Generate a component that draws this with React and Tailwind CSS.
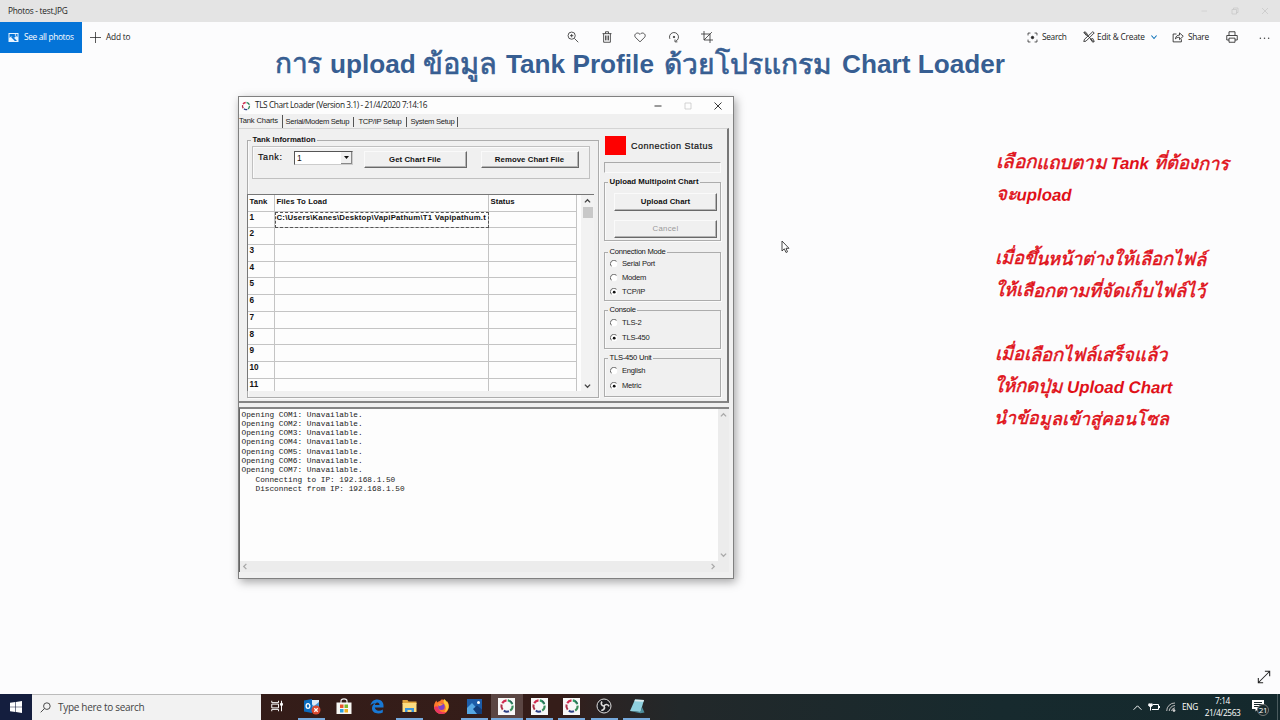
import React from "react";

const UI = "font-['Open_Sans','Noto_Sans',sans-serif]";

function Ico({ w = 12, box = "0 0 16 16", children, cls = "", sw = 1.1 }) {
  return (
    <svg width={w} height={w} viewBox={box} fill="none" stroke="currentColor" strokeWidth={sw} className={"shrink-0 block " + cls}>
      {children}
    </svg>
  );
}

function TlsLogo({ size }) {
  return (
    <svg width={size} height={size} viewBox="0 0 20 20" fill="none" strokeWidth="2.6" className="block shrink-0">
      <path d="M11 3 A7 7 0 0 1 16.6 7.8" stroke="#2e9a63" />
      <path d="M17 9.5 A7 7 0 0 1 14 15.8" stroke="#3b8f5c" />
      <path d="M12.5 16.6 A7 7 0 0 1 6 15.8" stroke="#2c3f86" />
      <path d="M4.6 14.5 A7 7 0 0 1 3.2 8.2" stroke="#b03048" />
      <path d="M4 6.4 A7 7 0 0 1 9.4 3" stroke="#d02c50" />
      <path d="M14 3.5 L17 6.5" stroke="#303050" strokeWidth="1.2" />
    </svg>
  );
}

function TitleBar() {
  return (
    <div className="flex h-[22px] shrink-0 items-center bg-[#e4e4e4] pl-2 pr-[11px] text-[8.3px] text-[#222]">
      <span className="tracking-[-0.26px]">Photos - test.JPG</span>
      <div className="ml-auto flex items-center gap-[22px] text-[#c8c8c8]">
        <Ico w={8} cls="mr-[1px]"><path d="M3 8h11" /></Ico>
        <Ico w={8} sw={1.6}><path d="M2 5h9v9H2zM5 5V2h9v9h-3" /></Ico>
        <Ico w={8} sw={1.6}><path d="M2 2l12 12M14 2L2 14" /></Ico>
      </div>
    </div>
  );
}

function Toolbar() {
  return (
    <div className="flex h-[31px] shrink-0 items-center text-[8.3px] text-[#222]">
      <div className="flex h-[31px] w-[82px] shrink-0 items-center gap-[5px] bg-[#0474d8] pl-2 text-white">
        <svg width="11" height="11" viewBox="0 0 11 11" className="block">
          <path d="M.5 1h10v9H.5z" fill="#e8f4ff" />
          <path d="M1.5 2h8v3l-1.5-1-2 2-2.5-2.3-2 2.3z" fill="#0474d8" />
          <path d="M4 3.8l5 5.2H6.8L3 5z" fill="#0474d8" />
          <circle cx="7.5" cy="3" r=".8" fill="#fff" />
        </svg>
        <span className="whitespace-nowrap tracking-[-0.32px]">See all photos</span>
      </div>
      <div className="flex w-[485px] items-center gap-[5px] pl-2">
        <Ico w={11}><path d="M8 0v16M0 8h16" /></Ico>
        <span className="tracking-[-0.2px]">Add to</span>
      </div>
      <div className="flex h-[30px] items-center gap-[21.5px] self-start text-[#333]">
        <Ico w={12}><circle cx="6.2" cy="6.2" r="4.8" /><path d="M10 10l5 5M4 6.2h4.4M6.2 4v4.4" /></Ico>
        <Ico w={12}><path d="M2 3.5h12M6 3.5V1h4v2.500M3.500 3.500V15h9V3.500M6 6v6.500M8 6v6.500M10 6v6.500" /></Ico>
        <Ico w={12}><path d="M8 14.500L1.700 8.200C-.8 4.500 4.500.300 8 4.500 11.500.300 16.800 4.500 14.300 8.200z" /></Ico>
        <Ico w={12}><path d="M2.500 10.500A6 6 0 1 1 10.500 13.500M12.500 14.500H9.300v-3.200" /><circle cx="8" cy="8" r="1" fill="currentColor" /></Ico>
        <Ico w={12}><path d="M4 0v12h12M0 4h12v12M4 12L14.500 1.500" /></Ico>
      </div>
      <div className="ml-auto flex h-[30px] items-center self-start pr-[10px]">
        <Ico w={11}><path d="M5 1.500H1.500V5M11 1.500h3.500V5M5 14.500H1.500V11M11 14.500h3.500V11" /><circle cx="8" cy="8" r="1.800" fill="currentColor" /></Ico>
        <span className="ml-[4px] w-[41px] tracking-[-0.3px]">Search</span>
        <Ico w={12}><path d="M2 1.500l12 13M1 14l1-3L13 1l2 1.500L4 13.500zM1 2l2-1 3 3.500-1.500 1.500zM10 11l3-1 2 4-2 1z" /></Ico>
        <span className="ml-[2px] w-[54px] whitespace-nowrap tracking-[-0.22px]">Edit &amp; Create</span>
        <Ico w={6} sw={2.8} cls="text-[#0a70b8] mr-[15px]"><path d="M1 4l7 8 7-8" /></Ico>
        <Ico w={12}><path d="M6 4H1.500v10.500h11V11M4.500 10.500C5 7 7 5.500 10 5.500V2.500L15 7l-5 4.500V8.500C7.500 8.300 6 9 4.500 10.500z" /></Ico>
        <span className="ml-[4px] w-[38px] tracking-[-0.3px]">Share</span>
        <Ico w={12}><path d="M4 6V1h8v5M4 12H1V6h14v6h-3M4 9.500h8V15H4z" /></Ico>
        <Ico w={11} cls="ml-[21px]" sw={0}><g fill="#444"><circle cx="2" cy="9" r="1.100" /><circle cx="8" cy="9" r="1.100" /><circle cx="14" cy="9" r="1.100" /></g></Ico>
      </div>
    </div>
  );
}

function Button({ children, cls = "" }) {
  return (
    <div className={"flex items-center justify-center border border-t-[#fafafa] border-l-[#fafafa] border-r-[#696969] border-b-[#696969] bg-[#f0f0f0] shadow-[inset_-1px_-1px_0_#b4b4b4] whitespace-nowrap text-[7.8px] font-bold tracking-[0.05px] text-[#111] " + cls}>
      {children}
    </div>
  );
}

function Group({ title, bold, cls = "", children }) {
  return (
    <fieldset className={"min-w-0 border border-[#acacac] shadow-[inset_1px_0_0_#fafafa,1px_1px_0_#fafafa] " + cls}>
      <legend className={"ml-[3px] h-[10px] whitespace-nowrap px-[1.500px] leading-[10px] " + (bold ? "text-[7.8px] font-bold tracking-[0.03px]" : "text-[7.6px] tracking-[-0.23px]")}>
        {title}
      </legend>
      {children}
    </fieldset>
  );
}

function Radio({ on, children, cls = "" }) {
  return (
    <div className={"flex h-[10px] items-center gap-[4px] pl-[5px] text-[7.6px] leading-[10px] tracking-[-0.23px] text-[#222] " + cls}>
      <svg width="8" height="8" viewBox="0 0 8 8" className="block shrink-0">
        <circle cx="4" cy="4" r="3.200" fill="#fff" />
        <path d="M6.500 1.300A3.400 3.400 0 0 0 1.400 6.300" fill="none" stroke="#666" strokeWidth="1" />
        {on && <circle cx="4.200" cy="4.200" r="1.400" fill="#111" />}
      </svg>
      {children}
    </div>
  );
}

function Chevron({ dir, color }) {
  const d = { up: "M1 5l3-3 3 3", down: "M1 3l3 3 3-3", left: "M5 1L2 4l3 3", right: "M3 1l3 3-3 3" }[dir];
  return (
    <svg width="7" height="7" viewBox="0 0 8 8" fill="none" stroke={color} strokeWidth="1.500" className="block shrink-0"><path d={d} /></svg>
  );
}

function TankTable() {
  return (
    <div className="flex h-[197px] w-[347px] border-l border-t border-[#777] bg-[#fdfdfd] text-[7.8px] font-bold tracking-[0.07px] text-[#111]">
      <div className="grid w-[330px] shrink-0 auto-rows-[16.7px] grid-cols-[27px_214px_88px] content-start overflow-hidden">
        {["Tank", "Files To Load", "Status"].map((h) => (
          <div key={h} className="border-b border-r border-[#c4c4c4] pl-[1.500px] leading-[13px]">{h}</div>
        ))}
        {Array.from({ length: 11 }, (_, i) => (
          <React.Fragment key={i}>
            <div className="border-b border-r border-[#c4c4c4] pl-[1.500px] text-[8.2px] leading-[12.500px]">{i + 1}</div>
            <div className={"whitespace-nowrap border-b border-r border-[#c4c4c4] pl-[1.500px] leading-[12.500px] tracking-[0.2px] " + (i === 0 ? "outline-dashed outline-1 -outline-offset-1 outline-[#555]" : "")}>
              {i === 0 ? "C:\\Users\\Kanes\\Desktop\\VapiPathum\\T1 Vapipathum.t" : ""}
            </div>
            <div className="border-b border-r border-[#c4c4c4]" />
          </React.Fragment>
        ))}
      </div>
      <div className="ml-[3px] flex w-[13px] flex-col items-center bg-[#f2f2f2] pt-[3px] pb-[2px]">
        <Chevron dir="up" color="#444" />
        <div className="mt-[2px] h-[11px] w-[10px] bg-[#c8c8c8]" />
        <div className="mt-auto"><Chevron dir="down" color="#444" /></div>
      </div>
    </div>
  );
}

const LOG = [
  ...[1, 2, 3, 4, 5, 6, 7].map((n) => `Opening COM${n}: Unavailable.`),
  "   Connecting to IP: 192.168.1.50",
  "   Disconnect from IP: 192.168.1.50",
];

function LoaderWindow() {
  return (
    <div className="flex h-[483px] w-[496px] shrink-0 flex-col border border-[#808080] bg-[#f0f0f0] font-['Liberation_Sans',Arial,sans-serif] text-[#111] shadow-[2px_3px_9px_rgba(0,0,0,0.35)]">
      <div className={"flex h-[17px] shrink-0 items-center bg-[#fdfdfd] pl-[2px] pr-[11px] text-[8.300px] text-[#222] " + UI}>
        <TlsLogo size={10} />
        <span className="ml-[4px] whitespace-nowrap tracking-[-0.41px]">TLS Chart Loader (Version 3.1) - 21/4/2020 7:14:16</span>
        <div className="ml-auto flex items-center gap-[22px]">
          <Ico w={8} sw={1.800}><path d="M1 8h14" /></Ico>
          <Ico w={8} cls="text-[#c4c4c4]" sw={1.500}><path d="M2 2h12v12H2z" /></Ico>
          <Ico w={8} sw={1.800}><path d="M1 1l14 14M15 1L1 15" /></Ico>
        </div>
      </div>
      <div className="flex h-[14px] shrink-0 pt-[1px] text-[7.600px] leading-[13px] tracking-[-0.28px] text-[#222]">
        <div className="w-[44px] border-r border-[#555] leading-[11px] tracking-[-0.14px]">Tank Charts</div>
        <div className="mt-[2px] flex h-[10px] leading-[10px]">
          <div className="w-[71px] border-r border-[#555] pl-[2.500px]">Serial/Modem Setup</div>
          <div className="w-[53px] border-r border-[#555] pl-[4.500px]">TCP/IP Setup</div>
          <div className="w-[51px] border-r border-[#555] pl-[3.500px]">System Setup</div>
        </div>
      </div>
      <div className="mr-[4px] flex h-[275px] shrink-0 border-b-2 border-r-2 border-t border-b-[#858585] border-r-[#777] border-t-[#d4d4d4] pl-[8px]">
        <div className="w-[352px] shrink-0 pt-[6px]">
          <Group title="Tank Information" bold cls="h-[263px]">
            <div className="ml-[4px] mt-[1px] flex h-[33px] w-[338px] border border-[#c0c0c0] shadow-[inset_1px_1px_0_#fafafa] pl-[5px] pt-[4px]">
              <span className="w-[36px] text-[9px] leading-[13px] tracking-[0.6px] [-webkit-text-stroke:0.2px]">Tank:</span>
              <div className="flex h-[14px] w-[59px] border border-b-[#ccc] border-l-[#555] border-r-[#ccc] border-t-[#555] bg-white pl-[2px] text-[8.500px] leading-[12px]">
                1
                <div className="ml-auto flex w-[11px] items-center justify-center border-b border-r border-[#888] bg-[#f0f0f0]">
                  <svg width="5" height="3" viewBox="0 0 5 3" className="block"><path d="M0 0h5L2.500 3z" fill="#111" /></svg>
                </div>
              </div>
              <Button cls="ml-[10.500px] h-[17px] w-[103px]">Get Chart File</Button>
              <Button cls="ml-[14px] h-[17px] w-[98px]">Remove Chart File</Button>
            </div>
            <div className="-ml-px mt-[15px]"><TankTable /></div>
          </Group>
        </div>
        <div className="ml-[5px] flex w-[117px] flex-col">
          <div className="flex items-center gap-[5px] pl-[1px] pt-[7px]">
            <div className="h-[19px] w-[21px] shrink-0 bg-[#fe0000]" />
            <span className="whitespace-nowrap pt-[2px] text-[9px] leading-[13px] tracking-[0.5px] [-webkit-text-stroke:0.2px]">Connection Status</span>
          </div>
          <div className="mt-[7px] h-[11px] shrink-0 border border-b-[#fafafa] border-l-[#aaa] border-r-[#fafafa] border-t-[#aaa]" />
          <Group title="Upload Multipoint Chart" bold cls="mt-[4px] h-[64px]">
            <Button cls="ml-[9px] mt-[6px] h-[18px] w-[103px]">Upload Chart</Button>
            <Button cls="ml-[9px] mt-[9px] h-[18px] w-[103px] !font-normal !text-[#999] !tracking-[0.3px]">Cancel</Button>
          </Group>
          <Group title="Connection Mode" cls="mt-[6px] h-[54px]">
            <Radio cls="mt-[2px]">Serial Port</Radio>
            <Radio cls="mt-[4px]">Modem</Radio>
            <Radio on cls="mt-[4px]">TCP/IP</Radio>
          </Group>
          <Group title="Console" cls="mt-[4px] h-[44px]">
            <Radio cls="mt-[3px]">TLS-2</Radio>
            <Radio on cls="mt-[5px]">TLS-450</Radio>
          </Group>
          <Group title="TLS-450 Unit" cls="mt-[4px] h-[44px]">
            <Radio cls="mt-[3px]">English</Radio>
            <Radio on cls="mt-[5px]">Metric</Radio>
          </Group>
        </div>
      </div>
      <div className="mr-[4px] mt-[4px] flex h-[165px] shrink-0 flex-col border-l border-t-2 border-l-[#666] border-t-[#858585]">
        <div className="flex min-h-0 flex-1">
          <div className="flex-1 bg-[#fdfdfd] pl-[1.500px] pt-[1.500px] font-['Liberation_Mono','Courier_New',monospace] text-[7.770px] leading-[9.330px] text-[#222]">
            {LOG.map((l) => <div key={l} className="whitespace-pre">{l}</div>)}
          </div>
          <div className="flex w-[11px] flex-col items-center justify-between bg-[#ececec] py-[3px]">
            <Chevron dir="up" color="#aaa" />
            <Chevron dir="down" color="#aaa" />
          </div>
        </div>
        <div className="flex h-[11px] shrink-0 items-center justify-between bg-[#ececec] pl-[2px] pr-[13px]">
          <Chevron dir="left" color="#aaa" />
          <Chevron dir="right" color="#aaa" />
        </div>
      </div>
    </div>
  );
}

const NOTES = [
  [["เลือกแถบตาม", "text-[18.900px]"], [" Tank ", ""], ["ที่ต้องการ", "text-[18.300px]"]],
  [["จะ", "text-[18.600px]"], ["upload", ""]],
  [],
  [["เมื่อขึ้นหน้าต่างให้เลือกไฟล์", "text-[18.200px]"]],
  [["ให้เลือกตามที่จัดเก็บไฟล์ไว้", "text-[18.300px]"]],
  [],
  [["เมื่อเลือกไฟล์เสร็จแล้ว", "text-[18.400px]"]],
  [["ให้กดปุ่ม", "text-[18.600px]"], [" Upload Chart", ""]],
  [["นำข้อมูลเข้าสู่คอนโซล", "text-[17.700px]"]],
];

function TaskItem({ open, active, first, children }) {
  return (
    <div className={"flex h-full flex-col items-center justify-center " + (first ? "w-[34.500px] pr-[2px] " : "w-[32.500px] ") + (active ? "bg-[#5b4643]" : "")}>
      <div className="flex flex-1 items-center justify-center">{children}</div>
      <div className={"h-[2px] " + (active ? "w-[32px] " : "w-[27px] ") + (open ? "bg-[#76a9dc]" : "")} />
    </div>
  );
}

function TlsTile() {
  return <div className="flex h-[17px] w-[17px] items-center justify-center bg-[#f8f8f8]"><TlsLogo size={16} /></div>;
}

function Taskbar() {
  return (
    <div className={"flex h-[26px] shrink-0 items-center bg-[linear-gradient(90deg,#331c18_0px,#351d19_560px,#2a2424_610px,#22282a_680px,#172a2e_1000px,#14292d_1280px)] text-white " + UI}>
      <div className="flex h-full w-[32px] items-center justify-center bg-[#141e3e]">
        <svg width="12" height="12" viewBox="0 0 12 12" fill="#fff" className="block"><path d="M0 1.700L5.400 1v4.700H0zM6 .9L12 0v5.700H6zM0 6.300h5.400V11L0 10.300zM6 6.300h6V12l-6-.9z" /></svg>
      </div>
      <div className="flex h-full w-[229px] items-center border-t border-[#bbb] bg-[#f2f2f2] pl-[8px] text-[#444]">
        <Ico w={11} sw={1.400}><circle cx="10" cy="6" r="4.800" /><path d="M6.500 9.500L1 15" /></Ico>
        <span className="ml-[7px] text-[10px] tracking-[-0.3px]">Type here to search</span>
      </div>
      <div className="flex h-full">
        <TaskItem first>
          <Ico w={12} sw={1.300}><path d="M1 1v2.500h9V1M1 5.500h9v5H1zM1 15v-2.500h9V15M14 1v14" /><path d="M12.800 4.500h2.400v2.500h-2.400z" fill="#fff" /></Ico>
        </TaskItem>
        <TaskItem open>
          <svg width="18" height="17" viewBox="0 0 18 17" className="block">
            <path d="M6 2h10v11H6z" fill="#dcebf8" /><path d="M6 4l5 4 5-4v9H6z" fill="#3f97dc" />
            <path d="M1 2.500L9 1v14l-8-1.500z" fill="#0b6cc0" />
            <ellipse cx="5" cy="8" rx="1.900" ry="2.400" fill="none" stroke="#fff" strokeWidth="1.300" />
            <circle cx="13" cy="12" r="4.500" fill="#d9492f" /><path d="M11.300 10.300l3.400 3.400M14.700 10.300l-3.400 3.400" stroke="#fff" strokeWidth="1.300" />
          </svg>
        </TaskItem>
        <TaskItem>
          <svg width="16" height="17" viewBox="0 0 16 17" className="block">
            <path d="M5 5V3a3 2.200 0 0 1 6 0v2" fill="none" stroke="#eee" strokeWidth="1.200" />
            <path d="M.5 4.500h15V16H.5z" fill="#f8f8f4" />
            <path d="M4 6.500h3.500V10H4z" fill="#e8542c" /><path d="M8.500 6.500H12V10H8.500z" fill="#7cb82c" />
            <path d="M4 11h3.500v3.500H4z" fill="#28a0e0" /><path d="M8.500 11H12v3.500H8.500z" fill="#f0b020" />
          </svg>
        </TaskItem>
        <TaskItem>
          <svg width="14" height="15" viewBox="0 0 14 15" className="block">
            <path d="M.5 6.500C1.200 2.500 4 .5 7.200.5c4 0 6.300 2.800 6.300 6v2H4.800c.2 2 1.800 3.200 4 3.200 1.500 0 2.800-.4 4-1.200v3c-1.200.7-2.700 1-4.500 1C4.500 14.500 2 12.500 2 9.300c0-2.200 1.200-4 3.200-5C3.300 4.300 1.500 5 .5 6.500zM4.900 6h4.600c0-1.500-.8-2.500-2.200-2.500C5.900 3.500 5.100 4.600 4.900 6z" fill="#1878d4" />
          </svg>
        </TaskItem>
        <TaskItem open>
          <svg width="15" height="14" viewBox="0 0 15 14" className="block">
            <path d="M.5 1h5l1 1.500h8V5H.5z" fill="#e0a43c" /><path d="M.5 4h14v9H.5z" fill="#fbdc80" /><path d="M3 9h9v4H3z" fill="#3c96dc" /><path d="M5.500 11h4v2h-4z" fill="#fbdc80" />
          </svg>
        </TaskItem>
        <TaskItem>
          <svg width="17" height="17" viewBox="0 0 17 17" className="block">
            <path d="M8.500 1.500C11 1 12 3 12.500 4l2-.5c1.500 2.500 2 5.500.5 8.500-1.500 3-4 4-6.500 4-4 0-7.500-3-7.500-7.500C1 6 2 4 3.500 2.500l.5 2c1-1 2-1.500 3-1.500z" fill="#ff7a2a" />
            <path d="M11 1c3 2 5 5 4.500 8.500C15 12 13 14 11 14.500c2-2 2.500-5 1-7.500-1-1.500-2-3-1-6z" fill="#ffc83a" />
            <path d="M1.200 9C1.500 13 4.500 16 8.500 16c2.500 0 4-1 5-2-3 1-7 0-8-3.500C5 8.500 4 7.500 1.200 9z" fill="#e83464" />
            <circle cx="8.500" cy="8.800" r="3.200" fill="#8040c8" /><path d="M5 6c2-1.500 4-.5 5 1-2-.3-2 1-4 1z" fill="#ff9a30" />
          </svg>
        </TaskItem>
        <TaskItem open>
          <svg width="15" height="15" viewBox="0 0 15 15" className="block">
            <path d="M0 0h15v15H0z" fill="#1c5ca8" /><path d="M0 9l5-5 10 11H0z" fill="#56a8e4" /><path d="M6 10l4-3.500 5 4V15H10z" fill="#123f7c" /><circle cx="11.500" cy="3.500" r="1.500" fill="#fff" />
          </svg>
        </TaskItem>
        <TaskItem open active><TlsTile /></TaskItem>
        <TaskItem open><TlsTile /></TaskItem>
        <TaskItem open><TlsTile /></TaskItem>
        <TaskItem open>
          <svg width="16" height="16" viewBox="0 0 16 16" className="block" fill="none" stroke="#ddd">
            <circle cx="8" cy="8" r="7" fill="#1c1c20" strokeWidth="1" />
            <path d="M8 8C5.500 8 4.500 5.500 6 3.500M8 8c1.300-2.100 4-2 5 .3M8 8c1.200 2.200-.3 4.500-2.800 4.500" strokeWidth="1.700" />
          </svg>
        </TaskItem>
        <TaskItem open>
          <svg width="16" height="16" viewBox="0 0 16 16" className="block">
            <path d="M6 1.500l9 .5-3.500 12-10.500-1z" fill="#8fd0de" /><path d="M6 1.500l9 .5-.5 1.800-9-.6z" fill="#dcecee" /><path d="M1 13l10.500 1 1.500-5 2.500 5.500-4 .8z" fill="#4d8e9e" />
          </svg>
        </TaskItem>
      </div>
      <div className="ml-auto flex h-full items-center">
        <Ico w={9} sw={1.700}><path d="M1 12l7-7 7 7" /></Ico>
        <svg width="12" height="10" viewBox="0 0 12 10" fill="none" stroke="#fff" className="ml-[6px] block"><path d="M5 2.500h5.500v5H4M11.500 4v2M1 1.500v2.500h3V1.500M2.500 4v4.500" /><path d="M1 2h3v2H1z" fill="#fff" /></svg>
        <svg width="10" height="10" viewBox="0 0 10 10" fill="none" stroke="#bbb" className="ml-[6px] block"><path d="M.7 9A8 8 0 0 1 9 1M3.200 9A6 6 0 0 1 9 3.500M5.500 9A4 4 0 0 1 9 5.800" /><circle cx="8" cy="8.500" r="1" fill="#fff" /></svg>
        <span className="ml-[6px] w-[22px] text-[8.300px] leading-[12px] tracking-[-0.3px]">ENG</span>
        <div className="w-[37px] pb-[1px] text-center text-[8.300px] leading-[12px] tracking-[-0.4px]">
          <div>7:14</div>
          <div className="whitespace-nowrap">21/4/2563</div>
        </div>
        <div className="relative ml-[11px] mr-[7px] h-[18px] w-[18px]">
          <svg width="12" height="12" viewBox="0 0 12 12" className="mt-[2px] block"><path d="M0 0h12v9H6l-2.500 2.500V9H0z" fill="#fff" /><path d="M2 2.500h8M2 4.500h8M2 6.500h5" stroke="#17292c" /></svg>
          <div className="absolute left-[5px] top-[6px] flex h-[12px] w-[12px] items-center justify-center rounded-full border border-[#777] bg-[#17292c] text-[8px] leading-none tracking-[-0.3px]">21</div>
        </div>
        <div className="h-full w-[3px] border-l border-[#4a5b5e]" />
      </div>
    </div>
  );
}

export default function App() {
  return (
    <div className={"relative flex h-[720px] w-[1280px] flex-col overflow-hidden bg-[#fcfcfd] " + UI}>
      <TitleBar />
      <Toolbar />
      <div className="flex min-h-0 flex-1 flex-col">
        <h1 className="flex h-[43px] shrink-0 whitespace-pre pl-[275px] font-['Liberation_Sans',Arial,sans-serif] text-[26.200px] font-bold leading-[22px] text-[#375e92]">
          <span className="w-[55px] text-[28px] font-normal tracking-[-0.300px] [-webkit-text-stroke:0.7px]">การ</span>
          <span className="w-[93px]">upload</span>
          <span className="w-[83px] text-[29px] font-normal [-webkit-text-stroke:0.7px]">ข้อมูล</span>
          <span className="w-[158px]">Tank Profile</span>
          <span className="w-[178px] text-[28.200px] font-normal [-webkit-text-stroke:0.7px]">ด้วยโปรแกรม</span>
          <span>Chart Loader</span>
        </h1>
        <div className="flex items-start pl-[238px]">
          <LoaderWindow />
          <div className="ml-[261px] mt-[51px] rotate-[0.35deg] whitespace-nowrap font-['Liberation_Sans',Arial,sans-serif] text-[16.800px] font-bold italic leading-[32px] text-[#e01018]">
            {NOTES.map((parts, i) => (
              <div key={i} className="h-[32px] whitespace-pre">
                {parts.map(([t, size]) => (
                  <span key={t} className={size ? "font-normal [-webkit-text-stroke:0.5px] " + size : ""}>{t}</span>
                ))}
              </div>
            ))}
          </div>
        </div>
        <div className="mt-auto flex justify-end pb-[10px] pr-[9px] text-[#222]">
          <Ico w={14} sw={1.200}><path d="M2 14L14 2M9 1.500h5.500V7M1.500 9v5.500H7" /></Ico>
        </div>
      </div>
      <Taskbar />
      <svg width="9" height="14" viewBox="0 0 9 14" className="absolute left-[781px] top-[240px]">
        <path d="M1 1v10l2.300-2.200L5 12.500l1.500-.7L5 8.300h3z" fill="#fff" stroke="#333" strokeWidth=".9" />
      </svg>
    </div>
  );
}
